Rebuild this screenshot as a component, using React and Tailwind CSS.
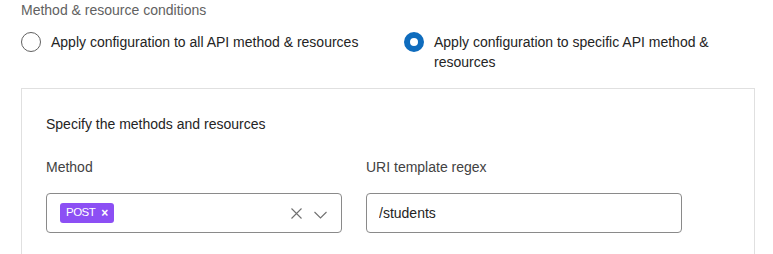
import React, { useState } from 'react';

const font = { fontFamily: '"Liberation Sans", Arial, sans-serif' };

const Radio = ({ checked, onClick, children, className = '' }) => (
  <label className={`flex items-start gap-[10px] cursor-pointer ${className}`} onClick={onClick}>
    {checked ? (
      <span className="w-5 h-5 shrink-0 rounded-full border-[6px] border-[#0f6cbd] bg-white" />
    ) : (
      <span className="w-5 h-5 shrink-0 rounded-full border border-[#616161] bg-white" />
    )}
    <span className="text-[14px] leading-5 text-[#242424]">{children}</span>
  </label>
);

export default function App() {
  const [scope, setScope] = useState('specific');
  const [uri, setUri] = useState('/students');

  return (
    <div className="bg-white h-[254px] overflow-hidden pl-[21px] w-[755px]" style={font}>
      <p className="text-[14px] leading-5 text-[#616161]">Method &amp; resource conditions</p>

      {/* Scope options */}
      <div className="flex mt-3">
        <Radio className="w-[383px]" checked={scope === 'all'} onClick={() => setScope('all')}>
          Apply configuration to all API method &amp; resources
        </Radio>
        <Radio className="flex-1" checked={scope === 'specific'} onClick={() => setScope('specific')}>
          Apply configuration to specific API method &amp; resources
        </Radio>
      </div>

      {/* Methods & resources panel */}
      <div className="mt-4 border border-[#e0e0e0] pl-6 pt-[25px] pb-8">
        <p className="text-[14px] leading-5 text-[#242424]">Specify the methods and resources</p>

        <div className="flex gap-6 mt-[23px]">
          <div className="w-[296px]">
            <p className="text-[14px] leading-5 text-[#424242]">Method</p>
            <div className="mt-4 h-10 flex items-center border border-[#8a8a8a] rounded-[4px] pl-[13px] pr-[14px]">
              <span className="h-5 flex items-center gap-[6px] px-[6px] rounded-[3px] bg-[#8c4ff4] text-white text-[11.5px] tracking-[-0.5px]">
                POST <span className="text-[12px] font-bold leading-none tracking-normal">×</span>
              </span>
              <div className="ml-auto flex items-center gap-3 text-[#707070]">
                <svg width="11" height="11" viewBox="0 0 11 11" fill="none" stroke="currentColor" strokeWidth="1.1">
                  <path d="M0.5 0.5 L10.5 10.5 M10.5 0.5 L0.5 10.5" />
                </svg>
                <svg width="13" height="8" viewBox="0 0 13 8" fill="none" stroke="currentColor" strokeWidth="1.1" className="mt-1">
                  <path d="M0.5 1 L6.5 7 L12.5 1" />
                </svg>
              </div>
            </div>
          </div>

          <div className="w-[316px]">
            <p className="text-[14px] leading-5 text-[#424242]">URI template regex</p>
            <input
              value={uri}
              onChange={(e) => setUri(e.target.value)}
              className="mt-4 h-10 w-full border border-[#8a8a8a] rounded-[4px] px-3 text-[14px] text-[#242424] outline-none"
              style={font}
            />
          </div>
        </div>
      </div>
    </div>
  );
}
